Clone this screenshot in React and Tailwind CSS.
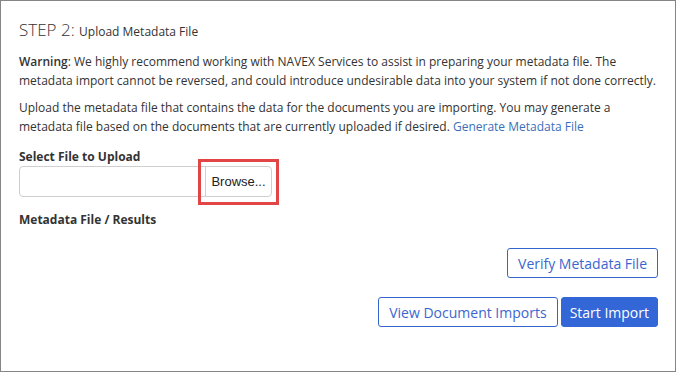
import React from 'react';

const font = { fontFamily: '"Open Sans", "Noto Sans", sans-serif' };

const App = () => {
  return (
    <div className="w-[676px] h-[373px] bg-white">
      <div
        className="w-[676px] h-[372px] border border-[#858585] pl-[18px] pr-[17px] pt-[18px] text-[12px] leading-[19px] text-[#333]"
        style={font}
      >
        {/* Heading */}
        <h2 className="text-[17px] leading-[22px] font-light text-[#333]">
          STEP 2: <span className="text-[12px] font-normal">Upload Metadata File</span>
        </h2>

        <p className="mt-[9px]">
          <span className="font-semibold">Warning</span>: We highly recommend working with NAVEX Services to assist in preparing your metadata file. The metadata import cannot be reversed, and could introduce undesirable data into your system if not done correctly.
        </p>

        <p className="mt-[8px]">
          Upload the metadata file that contains the data for the documents you are importing. You may generate a metadata file based on the documents that are currently uploaded if desired.{' '}
          <a className="text-[#3a6fb8]">Generate Metadata File</a>
        </p>

        {/* File picker */}
        <div className="mt-[12px]">
          <div className="font-bold leading-[18px]">Select File to Upload</div>
          <div className="flex relative">
            <div className="w-[187px] h-[31px] border border-[#cfcfcf] rounded-l-[4px] bg-white" />
            <button
              className="w-[67px] h-[31px] border border-[#cfcfcf] rounded-r-[4px] bg-white text-[13px] text-[#222] -ml-px"
              style={{ fontFamily: '"Liberation Sans", Arial, sans-serif' }}
            >
              Browse...
            </button>
            <div className="absolute left-[179px] -top-[7px] w-[81px] h-[46px] border-[3px] border-[#e14545] pointer-events-none" />
          </div>
          <div className="font-bold leading-[18px] mt-[14px]">Metadata File / Results</div>
        </div>

        {/* Actions */}
        <div className="flex justify-end mt-[19px]">
          <button className="h-[30px] px-[10px] border border-[#3366cc] rounded-[3px] text-[#3b66d0] text-[14px] bg-white">
            Verify Metadata File
          </button>
        </div>
        <div className="flex justify-end gap-[3px] mt-[19px]">
          <button className="h-[30px] px-[10px] border border-[#3366cc] rounded-[3px] text-[#3b66d0] text-[14px] bg-white">
            View Document Imports
          </button>
          <button className="h-[30px] px-[8px] border border-[#3366d6] rounded-[3px] text-white text-[14px] bg-[#3366d6]">
            Start Import
          </button>
        </div>
      </div>
    </div>
  );
};

export default App;
